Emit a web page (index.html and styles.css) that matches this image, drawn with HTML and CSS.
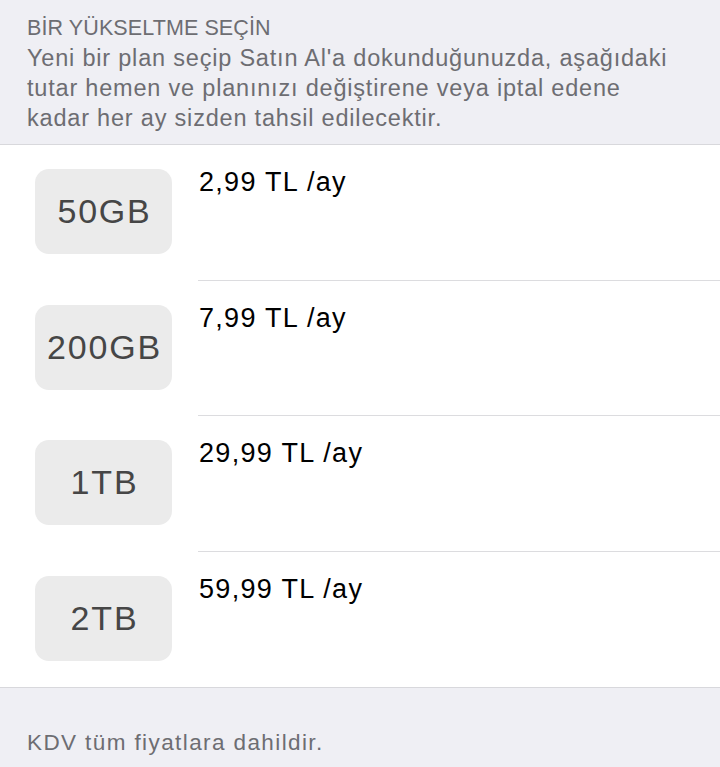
FILE: index.html
```html
<!DOCTYPE html>
<html lang="tr">
<head>
  <meta charset="UTF-8">
  <title>Depolama Planı</title>
  <meta name="viewport" content="width=device-width, initial-scale=1.0">
  <link rel="stylesheet" href="styles.css">
</head>
<body>
  <div class="header">
    <div class="header-title">BİR YÜKSELTME SEÇİN</div>
    <div class="header-text">Yeni bir plan seçip Satın Al'a dokunduğunuzda, aşağıdaki tutar hemen ve planınızı değiştirene veya iptal edene kadar her ay sizden tahsil edilecektir.</div>
  </div>

  <ul class="plans">
    <li class="plan">
      <div class="tile">50GB</div>
      <div class="info">2,99 TL /ay</div>
    </li>
    <li class="plan">
      <div class="tile">200GB</div>
      <div class="info">7,99 TL /ay</div>
    </li>
    <li class="plan">
      <div class="tile">1TB</div>
      <div class="info">29,99 TL /ay</div>
    </li>
    <li class="plan">
      <div class="tile">2TB</div>
      <div class="info">59,99 TL /ay</div>
    </li>
  </ul>

  <div class="footer">KDV tüm fiyatlara dahildir.</div>
</body>
</html>
```

FILE: styles.css
```css
body {
  font-family: "Liberation Sans", Arial, sans-serif;
  background: #efeff4;
  margin: 0;
  padding: 0;
}
.header {
  padding: 14px 30px 0 27px;
  height: 130px;
  border-bottom: 1px solid #d8d8dc;
  color: #6d6d72;
}
.header-title {
  font-size: 21.5px;
  line-height: 29px;
  letter-spacing: 0.1px;
}
.header-text {
  font-size: 23.5px;
  line-height: 30px;
  letter-spacing: 0.8px;
}
.plans {
  list-style-type: none;
  margin: 0;
  padding: 0;
  background: #fff;
  border-bottom: 1px solid #d8d8dc;
}
.plan {
  display: flex;
  height: 135.5px;
}
.tile {
  width: 137px;
  height: 85px;
  margin: 24px 0 0 35px;
  background: #ebebeb;
  border-radius: 14px;
  display: flex;
  align-items: center;
  justify-content: center;
  padding: 0 0 0 2px;
  box-sizing: border-box;
  font-size: 34px;
  color: #464646;
  letter-spacing: 1.8px;
}
.info {
  flex: 1;
  margin-left: 26px;
  padding: 22px 0 0 1px;
  font-size: 27px;
  letter-spacing: 1.3px;
  color: #000;
  border-bottom: 1px solid #dcdcdf;
}
.plan:last-child .info {
  border-bottom: none;
}
.footer {
  padding: 42px 27px 0 27px;
  height: 38px;
  font-size: 22.5px;
  letter-spacing: 1.4px;
  color: #6d6d72;
}
```
